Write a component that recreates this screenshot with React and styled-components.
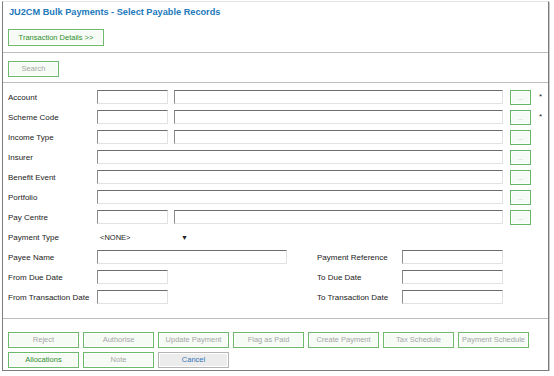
import React from "react";
import styled, { createGlobalStyle } from "styled-components";

const Global = createGlobalStyle`
  html, body { margin: 0; padding: 0; background: #ffffff; }
  body { font-family: "Liberation Sans", Arial, sans-serif; }
  * { box-sizing: border-box; }
`;

const Frame = styled.div`
  margin: 1px 0 0 2px;
  width: 547px;
  height: 370px;
  border: 1px solid #7d7d7d;
  border-top-color: #e4e4e4;
  box-shadow: 1px 1px 0 #c8c8c8;
  background: #fff;
  display: flex;
  flex-direction: column;
`;

const Title = styled.div`
  height: 21px;
  line-height: 21px;
  padding-left: 6px;
  font-size: 9.2px;
  font-weight: bold;
  color: #2279bb;
  flex: none;
`;

const Section = styled.div`
  display: flex;
  flex: none;
  padding: ${(p) => p.$pad || "0 0 0 5px"};
`;

const Divider = styled.div`
  height: 1px;
  flex: none;
  background: #bdbdbd;
  margin-top: ${(p) => p.$mt}px;
`;

const Btn = styled.button`
  display: block;
  width: ${(p) => p.$w || 71}px;
  height: ${(p) => p.$h || 16}px;
  padding: 0;
  margin: 0;
  line-height: 1;
  font-family: "Liberation Sans", Arial, sans-serif;
  font-size: 7.5px;
  border: 1px solid ${(p) => (p.$variant === "grey" ? "#b4b4b4" : "#6dba6d")};
  background: ${(p) => (p.$variant === "grey" ? "#ececec" : "#f6fbf6")};
  color: ${(p) =>
    p.$variant === "green" ? "#2f8f2f" : p.$variant === "grey" ? "#2f73b5" : "#a6a6a6"};
  box-shadow: inset 0 0 0 1px #ffffff;
  cursor: default;
  flex: none;
`;

const Form = styled.div`
  padding: 4px 0 0 5px;
  flex: none;
`;

const Row = styled.div`
  display: flex;
  align-items: center;
  height: 20px;
`;

const Label = styled.div`
  width: ${(p) => p.$w || 89}px;
  flex: none;
  font-size: 8px;
  color: #222;
  white-space: nowrap;
`;

const Input = styled.div`
  width: ${(p) => p.$w}px;
  height: 14px;
  flex: none;
  margin-right: ${(p) => p.$mr || 0}px;
  background: #fff;
  border-top: 1px solid #6e6e6e;
  border-left: 1px solid #8c8c8c;
  border-right: 1px solid #e2e2e2;
  border-bottom: 1px solid #e2e2e2;
`;

const Ellipsis = styled.div`
  width: 21px;
  height: 15px;
  flex: none;
  margin-left: ${(p) => p.$ml}px;
  border: 1px solid #67b567;
  background: #f7fbf7;
  box-shadow: inset 0 0 0 1px #fff;
  color: #b0b0b0;
  font-size: 6px;
  display: flex;
  align-items: center;
  justify-content: center;
  padding-top: 2px;
`;

const Star = styled.span`
  margin-left: 8px;
  font-size: 8px;
  color: #222;
  align-self: flex-start;
  margin-top: 5px;
`;

const Select = styled.div`
  width: 93px;
  height: 14px;
  display: flex;
  align-items: center;
  justify-content: space-between;
  padding: 0 2px 0 3px;
  font-size: 7.5px;
  color: #222;
  background: #fff;
`;

const Arrow = styled.span`
  font-size: 7px;
`;

const Half = styled.div`
  width: 309px;
  flex: none;
  display: flex;
  align-items: center;
`;

const ButtonRows = styled.div`
  margin-top: 13px;
  padding-left: 5px;
  display: flex;
  flex-direction: column;
  gap: 4px;
  flex: none;
`;

const ButtonRow = styled.div`
  display: flex;
  gap: 4px;
`;

const lookupRow = (label, split, star) => (
  <Row key={label}>
    <Label>{label}</Label>
    {split ? (
      <>
        <Input $w={71} $mr={6} />
        <Input $w={329} />
      </>
    ) : (
      <Input $w={406} />
    )}
    <Ellipsis $ml={7}>...</Ellipsis>
    {star && <Star>*</Star>}
  </Row>
);

export default function App() {
  return (
    <>
      <Global />
      <Frame>
        <Title>JU2CM Bulk Payments - Select Payable Records</Title>
        <Section $pad="6px 0 0 5px">
          <Btn $w={96} $h={17} $variant="green">Transaction Details &gt;&gt;</Btn>
        </Section>
        <Divider $mt={6} />
        <Section $pad="8px 0 0 5px">
          <Btn $w={51} $h={16}>Search</Btn>
        </Section>
        <Divider $mt={5} />
        <Form>
          {lookupRow("Account", true, true)}
          {lookupRow("Scheme Code", true, true)}
          {lookupRow("Income Type", true, false)}
          {lookupRow("Insurer", false, false)}
          {lookupRow("Benefit Event", false, false)}
          {lookupRow("Portfolio", false, false)}
          {lookupRow("Pay Centre", true, false)}
          <Row>
            <Label>Payment Type</Label>
            <Select>
              <span>&lt;NONE&gt;</span>
              <Arrow>▼</Arrow>
            </Select>
          </Row>
          <Row>
            <Half>
              <Label>Payee Name</Label>
              <Input $w={190} />
            </Half>
            <Label $w={85}>Payment Reference</Label>
            <Input $w={101} />
          </Row>
          <Row>
            <Half>
              <Label>From Due Date</Label>
              <Input $w={71} />
            </Half>
            <Label $w={85}>To Due Date</Label>
            <Input $w={101} />
          </Row>
          <Row>
            <Half>
              <Label>From Transaction Date</Label>
              <Input $w={71} />
            </Half>
            <Label $w={85}>To Transaction Date</Label>
            <Input $w={101} />
          </Row>
        </Form>
        <Divider $mt={11} />
        <ButtonRows>
          <ButtonRow>
            <Btn>Reject</Btn>
            <Btn>Authorise</Btn>
            <Btn>Update Payment</Btn>
            <Btn>Flag as Paid</Btn>
            <Btn>Create Payment</Btn>
            <Btn>Tax Schedule</Btn>
            <Btn>Payment Schedule</Btn>
          </ButtonRow>
          <ButtonRow>
            <Btn $variant="green">Allocations</Btn>
            <Btn>Note</Btn>
            <Btn $variant="grey">Cancel</Btn>
          </ButtonRow>
        </ButtonRows>
      </Frame>
    </>
  );
}
